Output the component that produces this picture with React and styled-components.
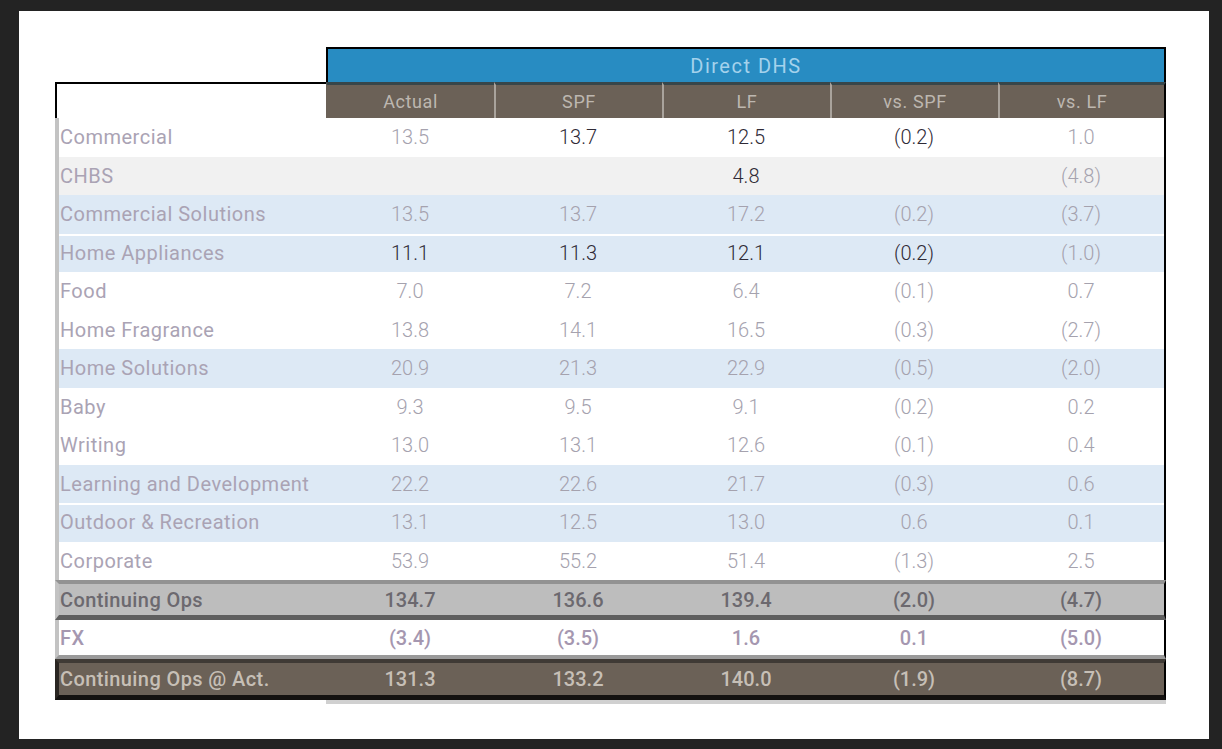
import React from 'react';
import styled, { createGlobalStyle } from 'styled-components';

const GlobalStyle = createGlobalStyle`
  html, body {
    margin: 0;
    padding: 0;
    background: #232323;
  }
`;

// White sheet sitting on the dark page
const Sheet = styled.div`
  margin: 11px 0 0 19px;
  width: 1190px;
  height: 728px;
  background: #fff;
  padding: 36px 0 0 36px;
  box-sizing: border-box;
  font-family: Roboto, "Liberation Sans", sans-serif;
`;

const Grid = styled.div`
  display: grid;
  grid-template-columns: 271px repeat(5, 168px);
  width: 1113px;
`;

const Blank = styled.div`
  height: 35px;
`;

// Blue "Direct DHS" banner
const Title = styled.div`
  grid-column: 2 / span 5;
  height: 35px;
  box-sizing: border-box;
  border: 2px solid #000;
  border-bottom: none;
  background: #288cc2;
  display: flex;
  align-items: center;
  justify-content: center;
  color: #a4d2ec;
  font-size: 20px;
  letter-spacing: 1.5px;
`;

const HeadLabel = styled.div`
  height: 36px;
  box-sizing: border-box;
  border-top: 2px solid #000;
  border-left: 2px solid #000;
`;

const HeadCell = styled.div`
  height: 36px;
  box-sizing: border-box;
  border-top: 3px solid #37464a;
  background: #6b6157;
  display: flex;
  align-items: center;
  justify-content: center;
  color: #bdb7b0;
  font-size: 18px;
  letter-spacing: 0.6px;
  border-left: ${p => (p.$first ? '1px solid #6b6157' : '2px solid #a9a39c')};
  border-right: ${p => (p.$last ? '2px solid #000' : 'none')};
`;

const tones = {
  white: '#ffffff',
  grey: '#f1f1f1',
  blue: '#dde9f5',
};

// Label cell of a regular line
const Label = styled.div`
  height: 38.5px;
  box-sizing: border-box;
  background: ${p => tones[p.$tone]};
  border-left: 4px solid #c3c3c3;
  padding-left: 1px;
  display: flex;
  align-items: center;
  font-size: 20px;
  letter-spacing: 0.5px;
  color: #aaa3b4;
  white-space: nowrap;
  box-shadow: ${p => (p.$split ? 'inset 0 2px 0 #fff' : 'none')};
`;

const Cell = styled.div`
  height: 38.5px;
  box-sizing: border-box;
  background: ${p => tones[p.$tone]};
  display: flex;
  align-items: center;
  justify-content: center;
  font-size: 20px;
  font-weight: 300;
  color: ${p => (p.$sharp ? '#2f2a36' : '#a5a2ae')};
  border-right: ${p => (p.$last ? '2px solid #000' : 'none')};
  box-shadow: ${p => (p.$split ? 'inset 0 2px 0 #fff' : 'none')};
`;

const totalStyles = {
  ops: { bg: '#bdbdbd', top: '4px solid #929292', bottom: '5px solid #5f5f5f', color: '#6c696f', h: 40 },
  fx: { bg: '#ffffff', top: 'none', bottom: '4px solid #9a9a9a', color: '#a597b0', h: 39 },
  act: { bg: '#6b6157', top: '4px solid #3f3a35', bottom: '5px solid #141210', color: '#c6bfb6', h: 41 },
};

const TotalLabel = styled.div`
  height: ${p => totalStyles[p.$kind].h}px;
  box-sizing: border-box;
  background: ${p => totalStyles[p.$kind].bg};
  border-top: ${p => totalStyles[p.$kind].top};
  border-bottom: ${p => totalStyles[p.$kind].bottom};
  border-left: 4px solid ${p => (p.$kind === 'act' ? '#2a2622' : '#c3c3c3')};
  padding-left: 1px;
  display: flex;
  align-items: center;
  font-size: 20px;
  letter-spacing: 0.4px;
  font-weight: 500;
  color: ${p => totalStyles[p.$kind].color};
  white-space: nowrap;
`;

const TotalCell = styled.div`
  height: ${p => totalStyles[p.$kind].h}px;
  box-sizing: border-box;
  background: ${p => totalStyles[p.$kind].bg};
  border-top: ${p => totalStyles[p.$kind].top};
  border-bottom: ${p => totalStyles[p.$kind].bottom};
  border-right: ${p => (p.$last ? '2px solid #000' : 'none')};
  display: flex;
  align-items: center;
  justify-content: center;
  font-size: 20px;
  font-weight: 500;
  color: ${p => totalStyles[p.$kind].color};
  box-shadow: ${p => (p.$kind === 'act' ? '0 4px 0 #d0d0d0' : 'none')};
`;

const columns = ['Actual', 'SPF', 'LF', 'vs. SPF', 'vs. LF'];

const rows = [
  { name: 'Commercial', tone: 'white', values: ['13.5', '13.7', '12.5', '(0.2)', '1.0'], sharp: [1, 2, 3] },
  { name: 'CHBS', tone: 'grey', values: ['', '', '4.8', '', '(4.8)'], sharp: [2] },
  { name: 'Commercial Solutions', tone: 'blue', values: ['13.5', '13.7', '17.2', '(0.2)', '(3.7)'] },
  { name: 'Home Appliances', tone: 'blue', split: true, values: ['11.1', '11.3', '12.1', '(0.2)', '(1.0)'], sharp: [0, 1, 2, 3] },
  { name: 'Food', tone: 'white', values: ['7.0', '7.2', '6.4', '(0.1)', '0.7'] },
  { name: 'Home Fragrance', tone: 'white', values: ['13.8', '14.1', '16.5', '(0.3)', '(2.7)'] },
  { name: 'Home Solutions', tone: 'blue', values: ['20.9', '21.3', '22.9', '(0.5)', '(2.0)'] },
  { name: 'Baby', tone: 'white', values: ['9.3', '9.5', '9.1', '(0.2)', '0.2'] },
  { name: 'Writing', tone: 'white', values: ['13.0', '13.1', '12.6', '(0.1)', '0.4'] },
  { name: 'Learning and Development', tone: 'blue', values: ['22.2', '22.6', '21.7', '(0.3)', '0.6'] },
  { name: 'Outdoor & Recreation', tone: 'blue', split: true, values: ['13.1', '12.5', '13.0', '0.6', '0.1'] },
  { name: 'Corporate', tone: 'white', values: ['53.9', '55.2', '51.4', '(1.3)', '2.5'] },
];

const totals = [
  { name: 'Continuing Ops', kind: 'ops', values: ['134.7', '136.6', '139.4', '(2.0)', '(4.7)'] },
  { name: 'FX', kind: 'fx', values: ['(3.4)', '(3.5)', '1.6', '0.1', '(5.0)'] },
  { name: 'Continuing Ops @ Act.', kind: 'act', values: ['131.3', '133.2', '140.0', '(1.9)', '(8.7)'] },
];

const App = () => (
  <>
    <GlobalStyle />
    <Sheet>
      <Grid>
        <Blank />
        <Title>Direct DHS</Title>

        <HeadLabel />
        {columns.map((c, i) => (
          <HeadCell key={c} $first={i === 0} $last={i === columns.length - 1}>
            {c}
          </HeadCell>
        ))}

        {rows.map(r => (
          <React.Fragment key={r.name}>
            <Label $tone={r.tone} $split={r.split}>{r.name}</Label>
            {r.values.map((v, i) => (
              <Cell
                key={i}
                $tone={r.tone}
                $split={r.split}
                $sharp={(r.sharp || []).includes(i)}
                $last={i === r.values.length - 1}
              >
                {v}
              </Cell>
            ))}
          </React.Fragment>
        ))}

        {totals.map(t => (
          <React.Fragment key={t.name}>
            <TotalLabel $kind={t.kind}>{t.name}</TotalLabel>
            {t.values.map((v, i) => (
              <TotalCell key={i} $kind={t.kind} $last={i === t.values.length - 1}>
                {v}
              </TotalCell>
            ))}
          </React.Fragment>
        ))}
      </Grid>
    </Sheet>
  </>
);

export default App;
